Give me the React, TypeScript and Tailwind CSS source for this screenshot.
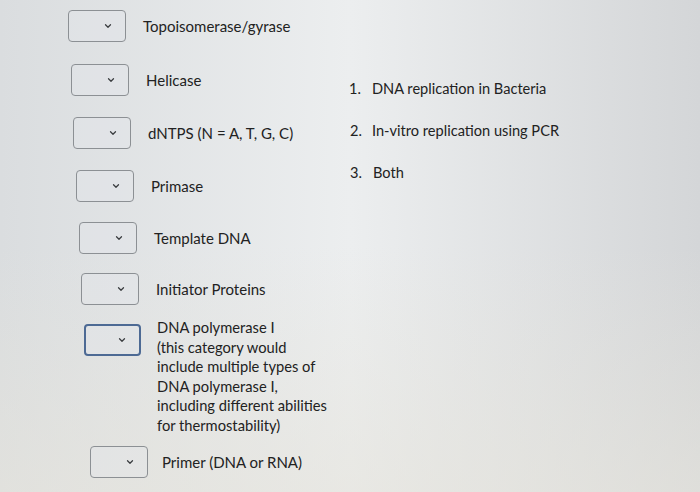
import { ChevronDown } from 'lucide-react';

type Row = { label: string[]; wrap: string; focused?: boolean };

const rows: Row[] = [
  { label: ['Topoisomerase/gyrase'], wrap: 'mt-[10px] ml-[68px]' },
  { label: ['Helicase'], wrap: 'mt-[22px] ml-[71px]' },
  { label: ['dNTPS (N = A, T, G, C)'], wrap: 'mt-[21px] ml-[73px]' },
  { label: ['Primase'], wrap: 'mt-[21px] ml-[76px]' },
  { label: ['Template DNA'], wrap: 'mt-[20px] ml-[79px]' },
  { label: ['Initiator Proteins'], wrap: 'mt-[19px] ml-[81px]' },
];

function Dropdown({ focused }: { focused?: boolean }) {
  return (
    <div
      className={
        focused
          ? 'flex items-center justify-end w-[57px] h-[32px] pr-[12px] rounded-[4px] border-2 border-[#4d6a94] bg-[#e4e7ea]/40'
          : 'flex items-center justify-end w-[58px] h-[32px] pr-[12px] rounded-[4px] border border-[#8c9094] bg-[#e4e7ea]/40'
      }
    >
      <ChevronDown className="w-[10px] h-[10px] text-[#3a3d40]" strokeWidth={3} />
    </div>
  );
}

export default function App() {
  return (
    <div
      className="relative w-[700px] h-[492px] overflow-hidden bg-linear-to-r from-[#dadddf] via-[#eceeef] to-[#d4d6d8] text-[#222222] text-[15px]"
      style={{ fontFamily: 'Lato, "Open Sans", sans-serif' }}
    >
      <div className="absolute inset-0 bg-linear-to-b from-transparent via-transparent to-[#e6e4dc]/60 pointer-events-none" />
      <div className="relative flex">
        <div className="flex flex-col w-[340px]">
          {rows.map((r) => (
            <div key={r.label[0]} className={`flex items-center gap-[17px] ${r.wrap}`}>
              <Dropdown />
              <span className="leading-[20px]">{r.label[0]}</span>
            </div>
          ))}
          <div className="flex items-start gap-[16px] mt-[13px] ml-[84px] text-[14.7px]">
            <div className="mt-[6px]">
              <Dropdown focused />
            </div>
            <div className="leading-[19.6px]">
              DNA polymerase I
              <br />
              (this category would
              <br />
              include multiple types of
              <br />
              DNA polymerase I,
              <br />
              including different abilities
              <br />
              for thermostability)
            </div>
          </div>
          <div className="flex items-center gap-[14px] mt-[10px] ml-[90px]">
            <Dropdown />
            <span className="leading-[20px]">Primer (DNA or RNA)</span>
          </div>
        </div>
        <ol className="flex flex-col gap-[22px] mt-[79px] ml-[9px] text-[14.6px]">
          <li className="flex leading-[20px]">
            <span className="w-[23px]">1.</span>DNA replication in Bacteria
          </li>
          <li className="flex leading-[20px] ml-[1px]">
            <span className="w-[22px]">2.</span>In-vitro replication using PCR
          </li>
          <li className="flex leading-[20px] ml-[1px]">
            <span className="w-[23px]">3.</span>Both
          </li>
        </ol>
      </div>
    </div>
  );
}
